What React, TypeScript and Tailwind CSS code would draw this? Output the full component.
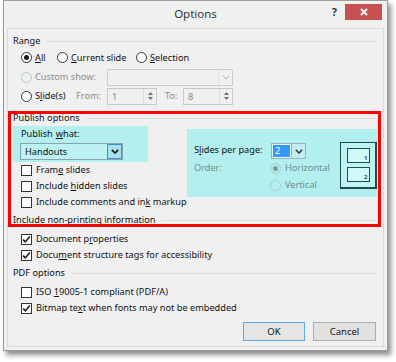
import type { ReactNode } from 'react';

function Radio({ checked = false, disabled = false }: { checked?: boolean; disabled?: boolean }) {
  return (
    <span
      className={`flex w-[11px] h-[11px] shrink-0 items-center justify-center rounded-full border ${
        disabled ? 'border-[#a9c9c9] bg-transparent' : 'border-[#333333] bg-white'
      }`}
    >
      {checked && (
        <span className={`w-[5px] h-[5px] rounded-full ${disabled ? 'bg-[#7f9c9c]' : 'bg-[#1a1a1a]'}`} />
      )}
    </span>
  );
}

function Checkbox({ checked = false }: { checked?: boolean }) {
  return (
    <span className="flex w-[11px] h-[11px] shrink-0 items-center justify-center border border-[#333333] bg-white">
      {checked && (
        <svg width="9" height="9" viewBox="0 0 9 9">
          <path d="M1.2 4.6 L3.4 6.9 L7.8 1.6" fill="none" stroke="#1a1a1a" strokeWidth="1.6" />
        </svg>
      )}
    </span>
  );
}

function Chevron({ color = '#333333', width = 1.5 }: { color?: string; width?: number }) {
  return (
    <svg width="8" height="5" viewBox="0 0 8 5">
      <path d="M0.8 0.8 L4 4 L7.2 0.8" fill="none" stroke={color} strokeWidth={width} />
    </svg>
  );
}

function GroupLabel({ children }: { children: ReactNode }) {
  return (
    <div className="flex h-[14px] items-center pr-[2px]">
      <span className="whitespace-nowrap">{children}</span>
      <span className="ml-[6px] h-px flex-1 bg-[#dcdcdc]" />
    </div>
  );
}

function CheckRow({ checked = false, children }: { checked?: boolean; children: ReactNode }) {
  return (
    <div className="flex h-[16px] items-center gap-[4px] pl-[8px]">
      <Checkbox checked={checked} />
      <span className="whitespace-nowrap">{children}</span>
    </div>
  );
}

function SpinBox({ value }: { value: string }) {
  return (
    <div className="flex h-[17px] w-[50px] border border-[#c9c9c9] bg-[#f0f0f0]">
      <span className="flex-1 pl-[4px] leading-[15px] text-[#8a8a8a]">{value}</span>
      <span className="flex w-[13px] flex-col items-center justify-center gap-[2px] border-l border-[#dddddd]">
        <svg width="5" height="3" viewBox="0 0 5 3">
          <path d="M0 3 L2.5 0 L5 3 Z" fill="#6f6f6f" />
        </svg>
        <svg width="5" height="3" viewBox="0 0 5 3">
          <path d="M0 0 L2.5 3 L5 0 Z" fill="#6f6f6f" />
        </svg>
      </span>
    </div>
  );
}

function PagePreview() {
  return (
    <div className="flex h-[47px] w-[37px] flex-col items-center gap-[4px] border border-[#1f4d4d] border-r-2 border-b-2 bg-[#bff4f4] pt-[5px]">
      {['1', '2'].map((n) => (
        <div
          key={n}
          className="flex h-[15px] w-[23px] items-end justify-end border border-[#1f4d4d] bg-[#d2f9f9] pr-[1px] text-[6px] leading-[7px] font-bold text-[#1f4d4d]"
        >
          {n}
        </div>
      ))}
    </div>
  );
}

export default function App() {
  return (
    <div className="h-[362px] w-[396px] bg-white pl-[3px] font-['Noto_Sans','Open_Sans',sans-serif] text-[9.2px] text-[#111111]">
      <div className="flex h-[351px] w-[385px] flex-col border border-[#9c9c9c] bg-[#f0f0f0] shadow-[3px_4px_5px_rgba(0,0,0,0.45)]">
        {/* title bar */}
        <div className="grid h-[27px] grid-cols-[1fr_auto_1fr]">
          <span />
          <span className="pt-[4px] text-[11.5px] text-[#333333]">Options</span>
          <div className="flex justify-end pt-[3px] pr-[5px]">
            <span className="mr-[8px] text-[11px] leading-[16px] font-bold text-[#333333]">?</span>
            <span className="flex h-[16px] w-[37px] items-center justify-center bg-[#c75050]">
              <svg width="8" height="8" viewBox="0 0 8 8">
                <path d="M1 1 L7 7 M7 1 L1 7" stroke="#ffffff" strokeWidth="1.8" />
              </svg>
            </span>
          </div>
        </div>

        {/* client area */}
        <div className="relative mx-[3px] mb-[3px] flex-1 border border-[#dadada] px-[5px] pt-[5px]">
          <GroupLabel>Range</GroupLabel>

          <div className="flex h-[20px] items-center pl-[8px]">
            <div className="flex w-[36px] items-center gap-[3px]">
              <Radio checked />
              <span>
                <u>A</u>ll
              </span>
            </div>
            <div className="flex w-[79px] items-center gap-[3px]">
              <Radio />
              <span>
                <u>C</u>urrent slide
              </span>
            </div>
            <div className="flex items-center gap-[3px]">
              <Radio />
              <span>
                <u>S</u>election
              </span>
            </div>
          </div>

          <div className="flex h-[18px] items-center pl-[8px]">
            <Radio disabled />
            <span className="ml-[3px] w-[72px] text-[#8d8d8d]">Custom show:</span>
            <div className="flex h-[17px] w-[126px] items-center justify-end border border-[#cccccc] bg-[#f0f0f0]">
              <span className="flex h-full w-[14px] items-center justify-center border-l border-[#dddddd]">
                <Chevron color="#a8a8a8" width={1} />
              </span>
            </div>
          </div>

          <div className="flex h-[20px] items-center pl-[8px]">
            <Radio />
            <span className="ml-[3px] w-[41px]">
              S<u>l</u>ide(s)
            </span>
            <span className="w-[31px] text-[#8d8d8d]">From:</span>
            <SpinBox value="1" />
            <span className="ml-[8px] w-[18px] text-[#8d8d8d]">To:</span>
            <SpinBox value="8" />
          </div>

          <div className="mt-[5px]">
            <GroupLabel>Publish options</GroupLabel>
          </div>

          <div className="mt-px flex items-start">
            <div className="w-[135px] shrink-0">
              <div className="h-[36px] bg-[#b4eff0] pt-px pl-[7px]">
                <div className="ml-px flex h-[14px] items-center">
                  Publish <u className="ml-[3px]">w</u>hat:
                </div>
                <div className="mt-[2px] flex h-[17px] w-[103px] border border-[#8aa3b3] bg-[#bdf2f3]">
                  <span className="flex-1 pl-[4px] leading-[15px]">Handouts</span>
                  <span className="flex w-[15px] items-center justify-center border border-[#3d8fd0] bg-[#a6e2ee]">
                    <Chevron color="#1a1a1a" width={1.7} />
                  </span>
                </div>
              </div>
              <CheckRow>
                Fram<u>e</u> slides
              </CheckRow>
              <CheckRow>
                Include <u>h</u>idden slides
              </CheckRow>
              <CheckRow>
                Include comments and in<u>k</u> markup
              </CheckRow>
            </div>

            <div className="mt-[3px] ml-[39px] flex h-[68px] w-[193px] shrink-0 bg-[#b4eff0] pl-[7px]">
              <div className="w-[112px] shrink-0 pt-[14px]">
                <div className="flex h-[16px] items-center">
                  <span className="-mt-[2px] w-[77px] whitespace-nowrap">
                    S<u>l</u>ides per page:
                  </span>
                  <div className="flex h-[16px] w-[35px] border border-[#9bb0b5] bg-[#e8fbfb]">
                    <span className="m-px flex w-[18px] items-center bg-[#3399ff] pl-[2px] leading-[12px] text-white">2</span>
                    <span className="ml-auto flex w-[14px] items-center justify-center border-l border-[#9bb0b5] bg-[#c4ecf0]">
                      <Chevron color="#333333" width={1.5} />
                    </span>
                  </div>
                </div>
                <div className="flex h-[18px] items-center whitespace-nowrap">
                  <span className="w-[76px] shrink-0 text-[#6f8d8d]">Order:</span>
                  <Radio checked disabled />
                  <span className="ml-[4px] text-[#6f8d8d]">Horizontal</span>
                </div>
                <div className="flex h-[16px] items-center whitespace-nowrap pl-[76px]">
                  <Radio disabled />
                  <span className="ml-[4px] text-[#6f8d8d]">Vertical</span>
                </div>
              </div>
              <div className="mt-[13px] mr-[3px] ml-auto">
                <PagePreview />
              </div>
            </div>
          </div>

          <div className="mt-[3px]">
            <GroupLabel>Include non-printing information</GroupLabel>
          </div>
          <div className="mt-[4px]">
            <CheckRow checked>
              Document p<u>r</u>operties
            </CheckRow>
            <CheckRow checked>
              Docu<u>m</u>ent structure tags for accessibility
            </CheckRow>
          </div>

          <div className="mt-[3px]">
            <GroupLabel>PDF options</GroupLabel>
          </div>
          <div className="mt-[4px]">
            <CheckRow>
              ISO <u>1</u>9005-1 compliant (PDF/A)
            </CheckRow>
            <CheckRow checked>
              Bitmap te<u>x</u>t when fonts may not be embedded
            </CheckRow>
          </div>

          <div className="mt-[6px] flex justify-end gap-[8px] pr-[2px]">
            <button className="h-[19px] w-[62px] border border-[#5fa8e6] bg-[#e5e5e5] text-[9.5px] leading-[17px] text-[#111111]">
              OK
            </button>
            <button className="h-[19px] w-[63px] border border-[#adadad] bg-[#e1e1e1] text-[9.5px] leading-[17px] text-[#111111]">
              Cancel
            </button>
          </div>

          {/* red highlight annotation drawn over the publish options */}
          <div className="pointer-events-none absolute top-[82px] left-0 h-[116px] w-[373px] border-[3px] border-[#ff0000]" />
        </div>
      </div>
    </div>
  );
}
